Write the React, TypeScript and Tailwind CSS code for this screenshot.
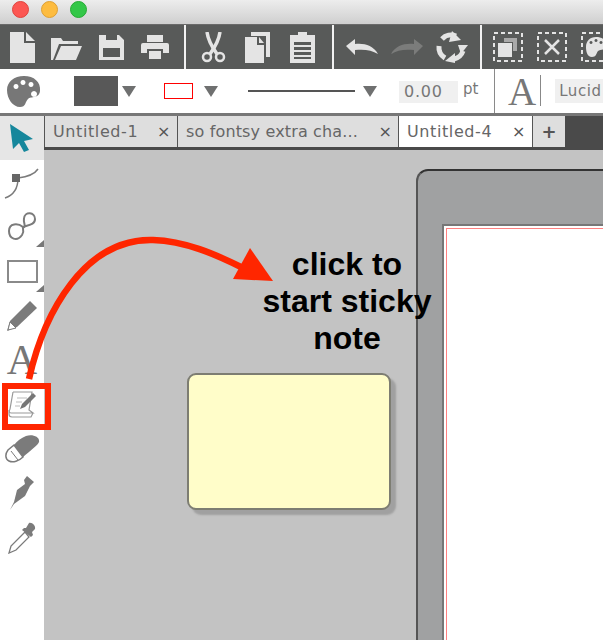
const ink = "#e4e4e4";
const grey = "#7b7b7b";

function Dot({ className }: { className: string }) {
  return <div className={`w-[17px] h-[17px] rounded-full ${className}`} />;
}

function Tri() {
  return (
    <svg width="14" height="11" viewBox="0 0 14 11">
      <path d="M0 0H14L7 11Z" fill="#6f7070" />
    </svg>
  );
}

function Corner() {
  return (
    <svg className="absolute right-0 bottom-[2px]" width="8" height="7" viewBox="0 0 8 7">
      <path d="M8 0V7H0Z" fill="#777" />
    </svg>
  );
}

function Sep() {
  return <div className="w-[2px] h-full bg-[#f2f2f2] shrink-0" />;
}

function TopBar() {
  return (
    <div className="flex items-center h-[45px] bg-[#585a59] shrink-0 overflow-hidden border-t border-[#6a6a6a]">
      <div className="flex items-center w-[184px] shrink-0 pl-[10px]">
        <svg width="25" height="31" viewBox="0 0 25 31">
          <path d="M0 0H14V11H25V31H0Z M16 0L25 9H16Z" fill={ink} />
        </svg>
        <svg className="ml-[16px]" width="32" height="25" viewBox="0 0 32 25">
          <path d="M1 3H10L12 6H27V9H8L2 25H0V3Z M10 11H31L25 25H4Z" fill={ink} />
        </svg>
        <svg className="ml-[16px]" width="25" height="25" viewBox="0 0 25 25">
          <path fillRule="evenodd" d="M0 0H20L25 5V25H0Z M7 0H18V5H7Z M4 13V22H21V13Z" fill={ink} />
        </svg>
        <svg className="ml-[17px]" width="28" height="24" viewBox="0 0 28 24">
          <path fillRule="evenodd" d="M6 0H22V7H6Z M2 8H26Q28 8 28 10V18H22V14H6V18H0V10Q0 8 2 8Z M8 16H20V24H8Z" fill={ink} />
        </svg>
      </div>
      <Sep />
      <div className="flex items-center w-[146px] shrink-0 pl-[15px]">
        <svg width="25" height="31" viewBox="0 0 25 31">
          <g fill="none" stroke={ink}>
            <path d="M6 0C7 8 11 15 16 22" strokeWidth="3.5" />
            <path d="M19 0C18 8 14 15 9 22" strokeWidth="3.5" />
            <circle cx="6" cy="25" r="4" strokeWidth="2.5" />
            <circle cx="19" cy="25" r="4" strokeWidth="2.5" />
          </g>
        </svg>
        <svg className="ml-[19px]" width="25" height="31" viewBox="0 0 25 31">
          <path fillRule="evenodd" d="M6 0H25V25H21V4H6Z M0 5H12V13H19V31H0Z M14 5L19 11H14Z" fill={ink} />
        </svg>
        <svg className="ml-[20px]" width="25" height="31" viewBox="0 0 25 31">
          <path fillRule="evenodd" d="M0 3H8V0H17V3H25V31H0Z M4 10V13H21V10Z M4 15V18H21V15Z M4 20V23H21V20Z M4 25V27H21V25Z" fill={ink} />
        </svg>
      </div>
      <Sep />
      <div className="flex items-center w-[146px] shrink-0 pl-[12px]">
        <svg width="32" height="16" viewBox="0 0 32 16">
          <path d="M9 0V5C18 4 27 6 32 15C26 11 18 10 9 11V16L0 7Z" fill={ink} />
        </svg>
        <svg className="ml-[13px]" width="32" height="16" viewBox="0 0 32 16">
          <path d="M23 0V5C14 4 5 6 0 15C6 11 14 10 23 11V16L32 7Z" fill="#7b7c7b" />
        </svg>
        <svg className="ml-[11px]" width="34" height="32" viewBox="0 0 34 32">
          <g fill="none" stroke={ink} strokeWidth="5">
            <path d="M8 8A12.5 12.5 0 0 1 22 5" />
            <path d="M29 20A12.5 12.5 0 0 1 20 28" />
            <path d="M11 27A12.5 12.5 0 0 1 5 15" />
          </g>
          <g fill={ink}>
            <path d="M18 0L27 9L15 11Z" />
            <path d="M24 14H34L27 23Z" />
            <path d="M21 22V32L11 30Z" />
          </g>
        </svg>
      </div>
      <Sep />
      <div className="flex items-center pl-[11px] gap-[14px]">
        <svg width="30" height="30" viewBox="0 0 30 30" className="shrink-0">
          <rect x="1" y="1" width="28" height="28" fill="none" stroke={ink} strokeWidth="2" strokeDasharray="4 3" />
          <path d="M11 6H24V19H20V10H11Z" fill="#a9a9a9" />
          <rect x="5" y="11" width="14" height="14" fill={ink} />
        </svg>
        <svg width="30" height="30" viewBox="0 0 30 30" className="shrink-0">
          <rect x="1" y="1" width="28" height="28" fill="none" stroke={ink} strokeWidth="2" strokeDasharray="4 3" />
          <path d="M8 8L22 22M22 8L8 22" stroke={ink} strokeWidth="2.5" />
        </svg>
        <svg width="30" height="30" viewBox="0 0 30 30" className="shrink-0">
          <rect x="1" y="1" width="28" height="28" fill="none" stroke={ink} strokeWidth="2" strokeDasharray="4 3" />
          <path fillRule="evenodd" d="M15 5C22 5 26 9 25 14C24 19 19 17 17 19C15 22 15 25 11 25C6 25 5 19 5 15C5 9 9 5 15 5Z M10 9A1.5 1.5 0 1 0 10.01 9Z M15 7A1.5 1.5 0 1 0 15.01 7Z M20 9A1.5 1.5 0 1 0 20.01 9Z" fill={ink} />
        </svg>
      </div>
    </div>
  );
}

function PropsBar() {
  return (
    <div className="flex items-center h-[44px] bg-white shrink-0 overflow-hidden" style={{ fontFamily: "'DejaVu Sans', sans-serif" }}>
      <svg className="ml-[7px] shrink-0" width="34" height="32" viewBox="0 0 34 32">
        <path
          fillRule="evenodd"
          d="M17 1C27 1 34 7 33 16C32 24 24 21 21 24C18 27 19 32 13 32C6 32 0 24 0 15C0 7 7 1 17 1Z M9 9A2.5 2.5 0 1 0 9.01 9Z M16 5A2.5 2.5 0 1 0 16.01 5Z M24 7A2.5 2.5 0 1 0 24.01 7Z M27 16A3 3 0 1 0 27.01 16Z"
          fill="#777"
        />
      </svg>
      <div className="ml-[33px] w-[44px] h-[30px] bg-[#585858] shrink-0" />
      <div className="ml-[4px] shrink-0 flex"><Tri /></div>
      <div className="ml-[28px] w-[29px] h-[16px] border border-[#f00] shrink-0" />
      <div className="ml-[11px] shrink-0 flex"><Tri /></div>
      <div className="ml-[30px] w-[107px] h-[2px] bg-[#555] shrink-0" />
      <div className="ml-[8px] shrink-0 flex"><Tri /></div>
      <div className="ml-[22px] w-[59px] h-[22px] mt-[2px] bg-[#f0f0f0] shrink-0 flex items-center pl-[5px] text-[16px] tracking-[0.8px] text-[#777]">0.00</div>
      <div className="ml-[5px] text-[15px] text-[#777] w-[31px] shrink-0 -mt-[3px]">pt</div>
      <div className="w-[1px] h-full bg-[#8a8a8a] shrink-0" />
      <div className="ml-[13px] flex items-end shrink-0 h-[30px]">
        <span className="text-[39px] leading-[28px] text-[#777]" style={{ fontFamily: "'Liberation Serif', serif" }}>A</span>
        <div className="w-[1px] h-[31px] bg-[#888] ml-[4px]" />
      </div>
      <div className="ml-[14px] h-[24px] w-[60px] bg-[#f0f0f0] shrink-0 flex items-center pl-[4px] text-[15px] tracking-[0.6px] text-[#777]">Lucid</div>
    </div>
  );
}

function Tab({ title, className, active }: { title: string; className: string; active?: boolean }) {
  return (
    <div className={`flex items-center justify-between h-full pl-[8px] pr-[6px] border-r border-[#555] shrink-0 ${className} ${active ? "bg-white" : "bg-[#dedede]"}`}>
      <span className="text-[16px] text-[#666] whitespace-nowrap">{title}</span>
      <span className="text-[16px] text-[#555] leading-none">×</span>
    </div>
  );
}

function TabRow() {
  return (
    <div className="flex h-[34px] shrink-0 bg-[#4a4a4a] pb-[3px]" style={{ fontFamily: "'DejaVu Sans', sans-serif" }}>
      <div className="w-[1px] bg-[#555] shrink-0" />
      <Tab title="Untitled-1" className="w-[133px] tracking-[0.6px]" />
      <Tab title="so fontsy extra cha..." className="w-[221px] tracking-[0.15px]" />
      <Tab title="Untitled-4" className="w-[134px] tracking-[0.6px]" active />
      <div className="w-[32px] h-full bg-[#dedede] flex items-center justify-center text-[18px] font-bold text-[#555] shrink-0">+</div>
    </div>
  );
}

function ToolCell({ children, selected, corner }: { children: React.ReactNode; selected?: boolean; corner?: boolean }) {
  return (
    <div className={`relative flex items-center justify-center h-[44.4px] shrink-0 ${selected ? "bg-[#e6e6e6]" : ""}`}>
      {children}
      {corner && <Corner />}
    </div>
  );
}

function Tools() {
  return (
    <div className="flex flex-col w-[44px] bg-white shrink-0">
      <ToolCell selected>
        <svg className="-ml-[2px]" width="24" height="28" viewBox="0 0 24 28">
          <path d="M1 0L24 15L15 17L20 26L15 28L10 19L4 25Z" fill="#16879c" />
        </svg>
      </ToolCell>
      <ToolCell>
        <svg width="36" height="32" viewBox="0 0 36 32">
          <path d="M34 2C30 8 22 10 14 11C14 20 10 28 1 31" fill="none" stroke={grey} strokeWidth="1.5" />
          <rect x="8" y="7" width="8" height="8" fill="#666" />
        </svg>
      </ToolCell>
      <ToolCell corner>
        <svg className="-ml-[1px]" width="28" height="30" viewBox="0 0 28 30">
          <path d="M15 15C10 11 1 11 1 19C1 27 9 30 14 23C17 18 14 16 15 15C20 13 27 13 27 7C27 0 17 -1 16 6C15 11 19 16 15 15" fill="none" stroke={grey} strokeWidth="2" />
        </svg>
      </ToolCell>
      <ToolCell corner>
        <div className="w-[31px] h-[23px] border-2 border-[#8a8a8a]" />
      </ToolCell>
      <ToolCell>
        <svg width="30" height="30" viewBox="0 0 30 30">
          <path d="M23 0L30 7L10 26L0 30L3 20Z" fill="#7b7b7b" />
          <path d="M3 21L9 27L1 29Z" fill="#fff" stroke={grey} />
        </svg>
      </ToolCell>
      <ToolCell>
        <span className="text-[42px] leading-none text-[#777]" style={{ fontFamily: "'Liberation Serif', serif" }}>A</span>
      </ToolCell>
      <ToolCell>
        <svg width="30" height="30" viewBox="0 0 30 30">
          <path d="M6 2H25L22 20L26 23H4C2 23 2 21 3 19L6 2M2 20V24Q2 27 5 27H24L26 23" fill="none" stroke="#999" strokeWidth="1.2" />
          <path d="M10 8H20M9 12H15M8 16H13" stroke="#bbb" strokeWidth="1" />
          <path d="M26 3L29 6L18 17L13 19L15 14Z" fill="#777" />
        </svg>
      </ToolCell>
      <ToolCell>
        <svg width="35" height="28" viewBox="0 0 35 28">
          <path d="M21 1C28 -1 35 2 34 7C33 10 26 15 18 22L9 10C12 6 16 3 21 1Z" fill="#7b7b7b" />
          <path d="M9 10L18 22C14 26 8 28 4 26C0 24 0 19 3 15Z" fill="#fff" stroke={grey} strokeWidth="1.5" />
          <path d="M6 16L13 25" stroke={grey} strokeWidth="1" />
        </svg>
      </ToolCell>
      <ToolCell>
        <svg width="25" height="34" viewBox="0 0 25 34">
          <path d="M17 0L24 6L20 10L15 20L4 28L0 34L4 26L7 14L15 8L14 4Z" fill="#7b7b7b" />
        </svg>
      </ToolCell>
      <ToolCell>
        <svg width="28" height="32" viewBox="0 0 28 32">
          <path d="M17 10L21 15L8 28L1 31L3 24Z" fill="#fff" stroke={grey} strokeWidth="1.3" />
          <path d="M21 1C24 0 28 4 27 7L24 10L25 13L23 15L14 8L16 6L18 6Z" fill="#7b7b7b" />
        </svg>
      </ToolCell>
    </div>
  );
}

function Canvas() {
  return (
    <div className="relative flex-1 bg-[#c3c3c3] pl-[372px] pt-[19px] overflow-hidden">
      <div className="h-full bg-[#a0a1a2] rounded-tl-[12px] border-t-2 border-l-2 border-t-[#333] border-l-[#555] pl-[24px] pt-[53px]">
        <div className="h-full bg-white border-t-2 border-l-2 border-[#777] pl-[2px] pt-[2px]">
          <div className="h-full border-t border-l border-[#ff8080]" />
        </div>
      </div>
      <div className="absolute left-[143px] top-[223px] w-[204px] h-[137px] bg-[#fffdc9] border-2 border-[#7d7d72] rounded-[9px] shadow-[5px_5px_2px_#a0a0a0]" />
    </div>
  );
}

export default function App() {
  return (
    <div className="relative flex flex-col w-[603px] h-[640px] overflow-hidden bg-white">
      <div className="flex items-center gap-[12px] h-[24px] pl-[12px] pb-[6px] shrink-0 bg-gradient-to-b from-[#ededed] to-[#cfcfcf]">
        <Dot className="bg-[#fc5753] border border-[#e0443e]" />
        <Dot className="bg-[#fdbc40] border border-[#dea034]" />
        <Dot className="bg-[#33c748] border border-[#27aa35]" />
      </div>
      <TopBar />
      <PropsBar />
      <div className="h-[3px] bg-[#777] shrink-0" />
      <div className="flex flex-1 min-h-0">
        <Tools />
        <div className="flex flex-col flex-1 min-w-0">
          <TabRow />
          <Canvas />
        </div>
      </div>

      <svg className="absolute left-0 top-0 pointer-events-none" width="603" height="640" viewBox="0 0 603 640">
        <path d="M29 379C44 312 85 238 153 240C185 241 215 254 243 268" fill="none" stroke="#ff2600" strokeWidth="6.5" />
        <path d="M250 248L273 281L233 279Z" fill="#ff2600" />
      </svg>
      <div className="absolute left-[2px] top-[383px] w-[49px] h-[47px] border-[6px] border-[#ff2600]" />
      <div
        className="absolute left-[247px] top-[246px] w-[200px] text-center text-[32px] leading-[37px] font-bold text-black"
        style={{ fontFamily: "'Liberation Sans', sans-serif" }}
      >
        click to
        <br />
        start sticky
        <br />
        note
      </div>
    </div>
  );
}
